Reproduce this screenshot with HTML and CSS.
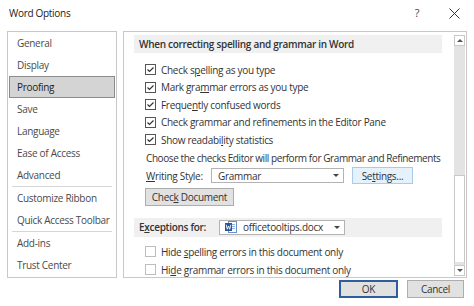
FILE: index.html
```html
<!DOCTYPE html>
<html>
<head>
<meta charset="utf-8">
<link rel="stylesheet" href="styles.css">
</head>
<body>
<div class="dialog">
  <header class="titlebar">
    <span class="title">Word Options</span>
    <span class="help">?</span>
    <span class="close"><svg width="11" height="11" viewBox="0 0 11 11"><path d="M0.5 0.5 L10.5 10.5 M10.5 0.5 L0.5 10.5" stroke="#333" stroke-width="1" fill="none"/></svg></span>
  </header>
  <div class="main">
    <nav class="nav">
      <div class="nav-item">General</div>
      <div class="nav-item">Display</div>
      <div class="nav-item selected">Proofing</div>
      <div class="nav-item">Save</div>
      <div class="nav-item">Language</div>
      <div class="nav-item">Ease of Access</div>
      <div class="nav-item">Advanced</div>
      <div class="nav-sep"></div>
      <div class="nav-item">Customize Ribbon</div>
      <div class="nav-item">Quick Access Toolbar</div>
      <div class="nav-sep"></div>
      <div class="nav-item">Add-ins</div>
      <div class="nav-item">Trust Center</div>
    </nav>
    <section class="panel">
      <div class="content">
        <div class="section-head">When correcting spelling and grammar in Word</div>
        <div class="checks">
          <div class="check-row"><span class="cb checked"><svg width="9" height="9" viewBox="0 0 9 9"><path d="M1.5 4.5 L3.5 6.5 L7.5 2.5" stroke="#333" stroke-width="1.2" fill="none"/></svg></span><span class="lbl">Check s<u>p</u>elling as you type</span></div>
          <div class="check-row"><span class="cb checked"><svg width="9" height="9" viewBox="0 0 9 9"><path d="M1.5 4.5 L3.5 6.5 L7.5 2.5" stroke="#333" stroke-width="1.2" fill="none"/></svg></span><span class="lbl">Mark gra<u>m</u>mar errors as you type</span></div>
          <div class="check-row"><span class="cb checked"><svg width="9" height="9" viewBox="0 0 9 9"><path d="M1.5 4.5 L3.5 6.5 L7.5 2.5" stroke="#333" stroke-width="1.2" fill="none"/></svg></span><span class="lbl">Freque<u>n</u>tly confused words</span></div>
          <div class="check-row"><span class="cb checked"><svg width="9" height="9" viewBox="0 0 9 9"><path d="M1.5 4.5 L3.5 6.5 L7.5 2.5" stroke="#333" stroke-width="1.2" fill="none"/></svg></span><span class="lbl">Check grammar and refinements in the Editor Pane</span></div>
          <div class="check-row"><span class="cb checked"><svg width="9" height="9" viewBox="0 0 9 9"><path d="M1.5 4.5 L3.5 6.5 L7.5 2.5" stroke="#333" stroke-width="1.2" fill="none"/></svg></span><span class="lbl">Show readabi<u>l</u>ity statistics</span></div>
        </div>
        <div class="plain">Choose the checks Editor will perform for Grammar and Refinements</div>
        <div class="style-row">
          <span class="style-label"><u>W</u>riting Style:</span>
          <span class="select"><span>Grammar</span><span class="caret"></span></span>
          <span class="btn settings"><span>Se<u>t</u>tings...</span></span>
        </div>
        <div class="doc-row"><span class="btn check-doc"><span>Chec<u>k</u> Document</span></span></div>
        <div class="exceptions">
          <span class="exc-label">E<u>x</u>ceptions for:</span>
          <span class="select file">
            <svg class="docicon" width="12" height="12" viewBox="0 0 12 12">
              <rect x="3.5" y="0.5" width="8" height="11" fill="#fff" stroke="#6a8fc6"/>
              <path d="M6 3.5 H10 M6 5.5 H10 M6 7.5 H10" stroke="#8fb0dc" stroke-width="1"/>
              <rect x="0" y="2" width="7" height="8" fill="#2b579a"/>
              <path d="M1.2 3.8 L2.3 8.2 L3.5 5 L4.7 8.2 L5.8 3.8" stroke="#fff" stroke-width="0.9" fill="none"/>
            </svg>
            <span class="fname">officetooltips.docx</span><span class="caret"></span>
          </span>
        </div>
        <div class="check-row hide-row"><span class="cb"></span><span class="lbl">Hide <u>s</u>pelling errors in this document only</span></div>
        <div class="check-row hide-row"><span class="cb"></span><span class="lbl">Hi<u>d</u>e grammar errors in this document only</span></div>
      </div>
      <div class="scrollbar">
        <div class="sb-btn"><span class="up"></span></div>
        <div class="sb-thumb"></div>
        <div class="sb-track"></div>
        <div class="sb-btn"><span class="down"></span></div>
      </div>
    </section>
  </div>
  <footer class="footer">
    <span class="btn ok"><span>OK</span></span>
    <span class="btn cancel"><span>Cancel</span></span>
  </footer>
</div>
</body>
</html>
```

FILE: styles.css
```css
* { box-sizing: border-box; }
html, body { margin: 0; padding: 0; background: #fff; }
body {
  font-family: "Open Sans", "Noto Sans", sans-serif;
  font-size: 10px;
  color: #333;
  letter-spacing: -0.3px;
}
u { text-decoration: underline; text-underline-offset: 1px; }
.dialog {
  width: 474px;
  height: 306px;
  display: flex;
  flex-direction: column;
  overflow: hidden;
}
.titlebar {
  height: 31px;
  display: flex;
  align-items: flex-start;
  padding: 5px 14px 0 9px;
  line-height: 16px;
}
.title { font-size: 10px; letter-spacing: -0.3px; color: #222; flex: 1; }
.help { width: 12px; text-align: center; color: #444; font-size: 11px; margin-right: 26px; }
.close { padding-top: 2px; }

.main {
  height: 247px;
  display: flex;
  padding: 0 7px;
  gap: 6px;
}
.nav {
  width: 110px;
  border: 1px solid #c8c8c8;
  color: #4a4a4a;
  padding: 0 1px;
}
.nav-item {
  height: 22px;
  line-height: 22px;
  padding-left: 8px;
  white-space: nowrap;
}
.nav-item.selected {
  background: #d4d4d4;
  border: 1px solid #8c8c8c;
  line-height: 20px;
  padding-left: 7px;
  color: #222;
}
.nav-sep { height: 1px; background: #d6d6d6; margin: 0 3px; }

.panel {
  flex: 1;
  border: 1px solid #c8c8c8;
  display: flex;
  overflow: hidden;
}
.content {
  flex: 1;
  padding: 3px 12px 0 10px;
  overflow: hidden;
}
.section-head {
  background: #f0f0f0;
  height: 18px;
  line-height: 18px;
  padding-left: 5px;
  font-weight: 600;
  color: #333;
  white-space: nowrap;
}
.checks { margin-top: 8px; }
.check-row {
  height: 17.5px;
  display: flex;
  align-items: center;
  padding-left: 11px;
  white-space: nowrap;
}
.cb {
  width: 11px;
  height: 11px;
  border: 1px solid #666;
  margin-right: 5px;
  display: flex;
  align-items: center;
  justify-content: center;
  flex: none;
}
.cb.checked { border-color: #555; }
.hide-row .cb { border-color: #bdbdbd; }
.plain { height: 18px; line-height: 18px; padding-left: 12px; white-space: nowrap; letter-spacing: -0.42px; }
.style-row {
  height: 18px;
  display: flex;
  align-items: center;
  padding-left: 12px;
}
.style-label { width: 65px; white-space: nowrap; }
.select {
  width: 133px;
  height: 15px;
  border: 1px solid #b3b3b3;
  display: flex;
  align-items: center;
  padding-left: 6px;
  padding-right: 4px;
  justify-content: space-between;
  white-space: nowrap;
}
.caret {
  width: 0; height: 0;
  border-left: 3px solid transparent;
  border-right: 3px solid transparent;
  border-top: 3px solid #444;
}
.btn {
  display: inline-flex;
  align-items: center;
  justify-content: center;
  background: #e1e1e1;
  border: 1px solid #adadad;
  white-space: nowrap;
}
.settings {
  width: 61px;
  height: 17px;
  margin-left: 8px;
  background: #e5f1fb;
  border-color: #a9cbea;
}
.doc-row { padding: 3px 0 0 11px; height: 21px; }
.check-doc { width: 89px; height: 18px; }
.exceptions {
  margin-top: 12px;
  background: #f0f0f0;
  height: 19px;
  display: flex;
  align-items: center;
  padding-left: 5px;
}
.exc-label { width: 80px; font-weight: 600; white-space: nowrap; }
.select.file { width: 126px; height: 15px; padding-left: 5px; justify-content: flex-start; background: #fff; }
.docicon { flex: none; margin-right: 6px; }
.fname { flex: 1; }
.hide-row { height: 18px; }
.exceptions + .hide-row { margin-top: 6px; }

.scrollbar {
  width: 11px;
  margin: 3px 1px 1px 0;
  display: flex;
  flex-direction: column;
}
.sb-btn {
  height: 11px;
  border: 1px solid #c8c8c8;
  background: #fff;
  display: flex;
  align-items: center;
  justify-content: center;
}
.up { width: 0; height: 0; border-left: 3px solid transparent; border-right: 3px solid transparent; border-bottom: 3px solid #555; }
.down { width: 0; height: 0; border-left: 3px solid transparent; border-right: 3px solid transparent; border-top: 3px solid #555; }
.sb-thumb { height: 129px; background: #e3e3e3; }
.sb-track { flex: 1; border: 1px solid #c8c8c8; border-bottom-width: 3px; border-bottom-color: #e3e3e3; background: #fff; }

.footer {
  flex: 1;
  display: flex;
  justify-content: flex-end;
  align-items: flex-start;
  padding: 2px 10px 0 0;
  gap: 9px;
}
.ok { width: 59px; height: 18px; border: 2px solid #2f5e9e; background: #e1e1e1; }
.cancel { width: 57px; height: 18px; }
```
